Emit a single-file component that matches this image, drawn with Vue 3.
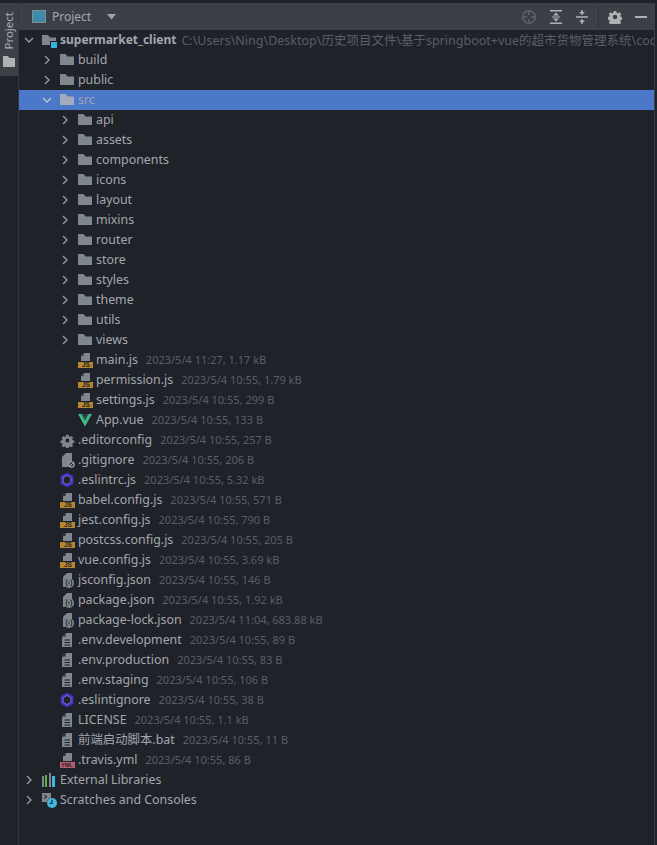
<script setup>
const f = (name, meta, icon, level = 1) => ({ name, meta, icon, level })
const d = (name, level = 2, open = false, selected = false) => ({ name, icon: 'folder', level, chev: open ? 'down' : 'right', selected })
const rows = [
  { name: 'supermarket_client', meta: 'C:\\Users\\Ning\\Desktop\\历史项目文件\\基于springboot+vue的超市货物管理系统\\code', icon: 'module', level: 0, chev: 'down', bold: true },
  d('build', 1), d('public', 1), d('src', 1, true, true),
  ...['api', 'assets', 'components', 'icons', 'layout', 'mixins', 'router', 'store', 'styles', 'theme', 'utils', 'views'].map(n => d(n)),
  f('main.js', '2023/5/4 11:27, 1.17 kB', 'js', 2),
  f('permission.js', '2023/5/4 10:55, 1.79 kB', 'js', 2),
  f('settings.js', '2023/5/4 10:55, 299 B', 'js', 2),
  f('App.vue', '2023/5/4 10:55, 133 B', 'vue', 2),
  f('.editorconfig', '2023/5/4 10:55, 257 B', 'gear'),
  f('.gitignore', '2023/5/4 10:55, 206 B', 'ignore'),
  f('.eslintrc.js', '2023/5/4 10:55, 5.32 kB', 'eslint'),
  f('babel.config.js', '2023/5/4 10:55, 571 B', 'js'),
  f('jest.config.js', '2023/5/4 10:55, 790 B', 'js'),
  f('postcss.config.js', '2023/5/4 10:55, 205 B', 'js'),
  f('vue.config.js', '2023/5/4 10:55, 3.69 kB', 'js'),
  f('jsconfig.json', '2023/5/4 10:55, 146 B', 'json'),
  f('package.json', '2023/5/4 10:55, 1.92 kB', 'json'),
  f('package-lock.json', '2023/5/4 11:04, 683.88 kB', 'json'),
  f('.env.development', '2023/5/4 10:55, 89 B', 'text'),
  f('.env.production', '2023/5/4 10:55, 83 B', 'text'),
  f('.env.staging', '2023/5/4 10:55, 106 B', 'text'),
  f('.eslintignore', '2023/5/4 10:55, 38 B', 'eslint'),
  f('LICENSE', '2023/5/4 10:55, 1.1 kB', 'text'),
  f('前端启动脚本.bat', '2023/5/4 10:55, 11 B', 'text'),
  f('.travis.yml', '2023/5/4 10:55, 86 B', 'yml'),
  { name: 'External Libraries', icon: 'libs', level: 0, chev: 'right' },
  { name: 'Scratches and Consoles', icon: 'scratch', level: 0, chev: 'right' },
]
const gear = 'M6.500 1h3l.4 2 1.400.6 1.700-1.100 2.100 2.100-1.100 1.700.6 1.400 2 .4v3l-2 .4-.6 1.400 1.100 1.700-2.100 2.100-1.700-1.100-1.400.6-.4 2h-3l-.4-2-1.400-.6-1.700 1.100-2.100-2.100 1.100-1.700-.6-1.400-2-.4v-3l2-.4.6-1.400-1.100-1.700 2.100-2.100 1.700 1.100 1.400-.6zM8 5.500a2.500 2.500 0 1 0 0 5 2.500 2.500 0 0 0 0-5z'
</script>

<template>
  <div class="window">
    <svg class="defs" width="0" height="0">
      <symbol id="i-folder" viewBox="0 0 16 16"><path d="M0 2h5.500l2 2.500H14V13H0z" fill="currentColor"/></symbol>
      <symbol id="i-module" viewBox="0 0 16 16"><path d="M0 3h6l2 2.500h6V13H0z" fill="currentColor"/><rect x="8" y="9" width="8" height="7" fill="#1f2229"/><rect x="9" y="10" width="6" height="6" fill="#3ab2e0"/></symbol>
      <symbol id="i-js" viewBox="0 0 16 16"><path d="M6.500 1H12v8H3V4.500zM5.500 1.500 3 4h2.500z" fill="currentColor"/><rect y="10" width="15" height="6" fill="#b5852f"/></symbol>
      <symbol id="i-vue" viewBox="0 0 16 16"><path d="M0 2h3.600L7 8.200 10.400 2H14L7 14.500z" fill="#41b883"/><path d="M3.600 2H6L7 4 8 2h2.400L7 8.200z" fill="#2f4a55"/></symbol>
      <symbol id="i-gear" viewBox="0 0 16 16"><path :d="gear" transform="translate(1 2) scale(.8)" fill="currentColor" fill-rule="evenodd"/></symbol>
      <symbol id="i-ignore" viewBox="0 0 16 16"><path d="M6 1h6v8.500a4.500 4.500 0 0 0-3.500 5.500H2V5z" fill="currentColor"/><circle cx="11.500" cy="12.500" r="2.700" fill="none" stroke="#a6aab0" stroke-width="1.100"/><path d="m9.700 14.300 3.600-3.600" stroke="#a6aab0" stroke-width="1.100"/></symbol>
      <symbol id="i-eslint" viewBox="0 0 16 16"><path d="M7 2.200 12 5v6l-5 2.800L2 11V5z" fill="none" stroke="#4b32c3" stroke-width="2.600" stroke-linejoin="round"/><path d="M7 3.500 10.800 5.700v4.600L7 12.500l-3.800-2.200V5.700z" fill="none" stroke="#7a7ae6" stroke-width=".8"/></symbol>
      <symbol id="i-json" viewBox="0 0 16 16"><path d="M7 1h5v6H3V5z" fill="currentColor"/><path d="M3 7h2v8H3z" fill="currentColor"/><circle cx="9" cy="11" r="5" fill="currentColor"/><path d="M7.500 7.800c-1.500 0-.5 2.700-1.700 3.200 1.200.5.2 3.200 1.700 3.200M10.500 7.800c1.500 0 .5 2.700 1.700 3.200-1.200.5-.2 3.200-1.700 3.200M9 9.500v3" fill="none" stroke="#1f2229" stroke-width="1"/></symbol>
      <symbol id="i-text" viewBox="0 0 16 16"><path d="M6.500 1H12v14H2V5.500zM5.500 1.500 2.500 4.500h3z" fill="currentColor" fill-rule="evenodd"/><path d="M4.500 8H10M4.500 10.500H10M4.500 13H10" stroke="#1f2229" stroke-width="1"/></symbol>
      <symbol id="i-yml" viewBox="0 0 16 16"><path d="M6.500 1H12v8H3V4.500zM5.500 1.500 3 4h2.500z" fill="currentColor"/><rect y="10" width="15" height="6" fill="#b75d72"/></symbol>
      <symbol id="i-libs" viewBox="0 0 16 16"><rect y="4" width="2" height="11" fill="currentColor"/><rect x="3" y="3" width="2" height="12" fill="#62b543"/><rect x="7" y="1" width="2" height="14" fill="currentColor"/><rect x="10" y="4" width="3" height="11" fill="#40b6e0"/></symbol>
      <symbol id="i-scratch" viewBox="0 0 16 16"><path d="M0 1h9v4.800A5.500 5.500 0 0 0 5 10H0z" fill="currentColor"/><path d="m2 3 3 1.800L2 6.700" fill="none" stroke="#1f2229"/><circle cx="10" cy="11" r="5" fill="#40b6e0"/><path d="M10 7.800V11.500H7.500" fill="none" stroke="#1f2229" stroke-width="1.100"/></symbol>
    </svg>
    <aside class="strip">
      <div class="strip-tab">
        <span class="strip-label">Project</span>
        <svg class="strip-icon" width="12" height="11" viewBox="0 0 12 11"><path d="M0 0h5l1.500 2H12v9H0z" fill="#afb1b3"/></svg>
      </div>
    </aside>
    <main class="panel">
      <header class="toolbar">
        <svg class="proj-icon" width="14" height="13" viewBox="0 0 14 13"><rect x=".5" y=".5" width="13" height="12" fill="#3d8bab" stroke="#868b91"/></svg>
        <span class="title">Project</span>
        <svg class="caret" width="9" height="6" viewBox="0 0 9 6"><path d="M0 0h9L4.500 5.500z" fill="#a0a4a9"/></svg>
        <span class="spacer"></span>
        <div class="tools">
          <svg width="16" height="16" viewBox="0 0 16 16" fill="none" stroke="#5f6367" stroke-width="1.500"><circle cx="8" cy="8" r="6.300"/><path d="M8 2v4M8 10v4M2 8h4M10 8h4"/></svg>
          <svg class="t2" width="14" height="14" viewBox="0 0 14 14" fill="#afb1b3"><path d="M1 0h12v1.500H1zM1 12.500h12V14H1zM7 2.500 10 5.500H4zM7 11.500 4 8.500h6zM3 6.400h8v1.200H3z"/></svg>
          <svg class="t3" width="14" height="14" viewBox="0 0 14 14" fill="#afb1b3"><path d="M1 6.200h12v1.500H1zM7 5 4 2h2.200V0h1.600v2H10zM7 9l3 3H7.800v2H6.200v-2H4z"/></svg>
          <span class="sep"></span>
          <svg width="14" height="14" viewBox="0 0 16 16"><path :d="gear" fill="#afb1b3" fill-rule="evenodd"/></svg>
          <span class="minimize"></span>
        </div>
      </header>
      <div class="tree">
        <div v-for="r in rows" :key="r.name" class="row" :class="{ selected: r.selected }" :style="{ paddingLeft: r.level * 18 + 'px' }">
          <span class="chev-box">
            <svg v-if="r.chev === 'right'" width="10" height="10" viewBox="0 0 10 10" fill="none" stroke="currentColor" stroke-width="1.300"><path d="m3 1 4 4-4 4"/></svg>
            <svg v-else-if="r.chev === 'down'" width="10" height="10" viewBox="0 0 10 10" fill="none" stroke="currentColor" stroke-width="1.300"><path d="m1 3 4 4 4-4"/></svg>
          </span>
          <svg class="icon" width="16" height="16">
            <use :href="'#i-' + r.icon" />
            <text v-if="r.icon === 'js'" x="4" y="15.200" class="badge">JS</text>
            <text v-if="r.icon === 'yml'" x="1" y="15.200" class="badge small">YML</text>
          </svg>
          <span class="name" :class="{ bold: r.bold }">{{ r.name }}</span>
          <span v-if="r.meta" class="meta" :class="{ path: r.bold }">{{ r.meta }}</span>
        </div>
      </div>
    </main>
    <div class="edge"></div>
  </div>
</template>

<style>
html, body { margin: 0; background: #1f2229; }
</style>

<style scoped>
.window { display: flex; width: 657px; height: 845px; overflow: hidden; background: #1f2229; font-family: "Noto Sans", "Noto Sans CJK SC", sans-serif; font-size: 12.400px; color: #a3a7ad; padding-top: 3px; box-sizing: border-box; }
.defs { position: absolute; }
.strip { width: 18px; flex: none; border-right: 1px solid #34383e; }
.strip-tab { height: 73px; background: #3b4047; display: flex; flex-direction: column; align-items: center; padding-top: 9px; box-sizing: border-box; gap: 6px; }
.strip-label { writing-mode: vertical-rl; transform: rotate(180deg); font-size: 11.500px; color: #a8abaf; line-height: 18px; }
.strip-icon { flex: none; }
.panel { flex: 1; min-width: 0; display: flex; flex-direction: column; overflow: hidden; }
.toolbar { height: 27px; flex: none; background: #3b4047; display: flex; align-items: center; padding-left: 13px; box-sizing: border-box; }
.proj-icon { flex: none; }
.title { margin-left: 6px; font-size: 12px; color: #a3a7ad; }
.caret { margin-left: 16px; }
.spacer { flex: 1; }
.tools { display: flex; align-items: center; padding-right: 7px; }
.t2, .t3 { margin-left: 12px; }
.sep { width: 1px; height: 20px; background: #2d3036; margin: 0 9px; }
.minimize { width: 12px; height: 2px; background: #afb1b3; margin-left: 13px; }
.tree { flex: 1; }
.row { height: 20px; display: flex; align-items: center; white-space: nowrap; color: #9a9ea3; }
.row.selected { background: #4b78c8; color: #c0c6d2; }
.chev-box { width: 23px; flex: none; display: flex; align-items: center; padding-left: 5px; box-sizing: border-box; }
.icon { flex: none; margin-right: 2px; color: #80868d; }
.selected .icon { color: #a3acbd; }
.badge { font-family: "Liberation Sans", sans-serif; font-size: 6.500px; font-weight: 700; fill: #1f2229; }
.badge.small { font-size: 5.500px; }
.name { color: #a3a7ad; margin-bottom: 2px; }
.name.bold { font-weight: 700; font-size: 12px; }
.meta { margin-left: 8px; font-size: 11px; color: #5a5f66; margin-bottom: 2px; }
.meta.path { margin-left: 5px; font-size: 12.500px; }
.edge { width: 2px; flex: none; border-left: 1px solid #3a3f45; }
</style>
